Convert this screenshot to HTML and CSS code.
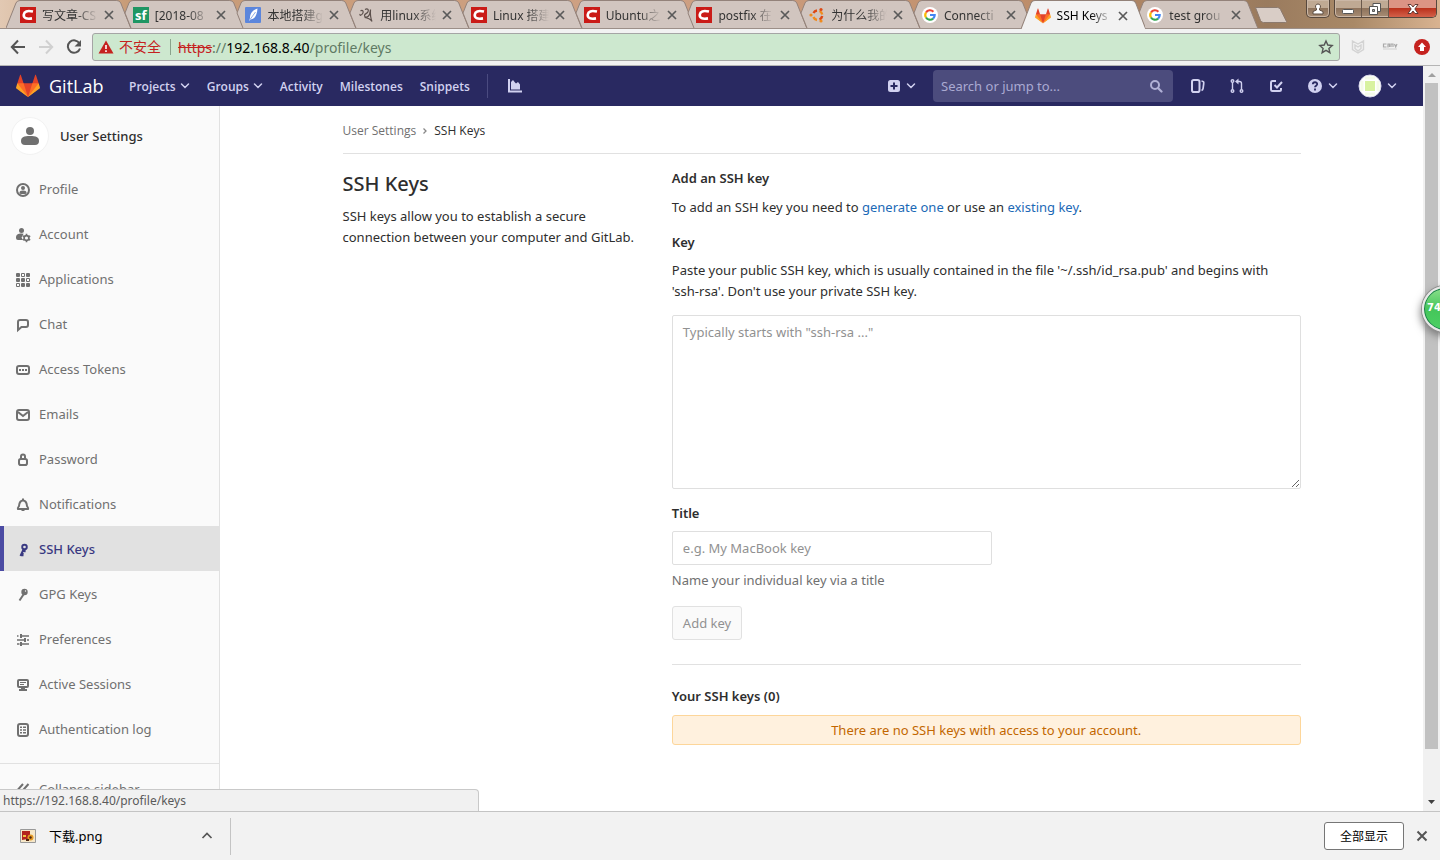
FILE: index.html
```html
<!DOCTYPE html>
<html lang="en">
<head>
    <meta charset="UTF-8">
    <meta name="viewport" content="width=device-width, initial-scale=1.0">
    <title>SSH Keys</title>
    <link rel="stylesheet" href="styles.css">
</head>
<body>
    <svg class="sprite" aria-hidden="true">
        <symbol id="tab-first" viewBox="0 0 125 28" preserveAspectRatio="none"><path d="M0 28 L10 3 Q11 .5 14 .5 H111 Q114 .5 115 3 L125 28"/></symbol>
        <symbol id="tab-next" viewBox="0 0 125 28" preserveAspectRatio="none"><path d="M12 28 L6 13 L10 3 Q11 .5 14 .5 H111 Q114 .5 115 3 L125 28"/></symbol>
        <symbol id="close" viewBox="0 0 10 10"><path d="M1 1l8 8M9 1l-8 8" fill="none" stroke="#5a5a5a" stroke-width="1.7"/></symbol>
        <symbol id="chevron" viewBox="0 0 10 10"><path d="M1.5 3l3.5 3.5L8.500 3" fill="none" stroke="currentColor" stroke-width="1.5" stroke-linecap="round"/></symbol>
        <symbol id="csdn" viewBox="0 0 16 16"><path fill="#ca1b17" d="M0 0h16v16H0z"/><path d="M13 4.600C7 3.200 4.200 4.500 3.800 7.500c-.5 3.500 2.400 4.800 8.200 3.900" fill="none" stroke="#fff" stroke-width="2.600"/></symbol>
        <symbol id="google" viewBox="0 0 16 16"><circle cx="8" cy="8" r="8" fill="#fff"/><g fill="none" stroke-width="2.200"><path stroke="#ea4335" d="M4 5.500A4.700 4.700 0 0 1 11.400 4.700"/><path stroke="#fbbc05" d="M4 5.500a4.700 4.700 0 0 0 0 5"/><path stroke="#34a853" d="M4 10.500a4.700 4.700 0 0 0 7.100 1.100"/><path stroke="#4285f4" d="M8 8h4.700a4.700 4.700 0 0 1-1.600 3.600"/></g></symbol>
        <symbol id="tanuki" viewBox="0 0 36 36"><path fill="#e24329" d="M2 14l9.380 9v-9l-4-12.280c-.205-.632-1.176-.632-1.380 0z"/><path fill="#e24329" d="M34 14l-9.380 9v-9l4-12.280c.205-.632 1.176-.632 1.380 0z"/><path fill="#e24329" d="M18 34.380L3 14h30z"/><path fill="#fc6d26" d="M18 34.380L11.380 14H2l4 11z"/><path fill="#fc6d26" d="M18 34.380L24.620 14H34l-4 11z"/><path fill="#fca326" d="M2 14L.1 20.160c-.18.565 0 1.200.5 1.560l17.420 12.660z"/><path fill="#fca326" d="M34 14l1.900 6.160c.18.565 0 1.200-.5 1.560L18 34.380z"/></symbol>
    </svg>

    <div class="titlebar">
        <div class="tabs">
            <div class="tab"><svg class="tab-shape"><use href="#tab-first"/></svg><svg class="favicon"><use href="#csdn"/></svg><span class="tab-title">写文章-CS</span><button class="tab-close" aria-label="Close"><svg><use href="#close"/></svg></button></div>
            <div class="tab"><svg class="tab-shape"><use href="#tab-next"/></svg><svg class="favicon" viewBox="0 0 16 16"><path fill="#1f9663" d="M0 0h16v16H0z"/><text class="sf" x="2" y="13">sf</text></svg><span class="tab-title">[2018-08</span><button class="tab-close" aria-label="Close"><svg><use href="#close"/></svg></button></div>
            <div class="tab"><svg class="tab-shape"><use href="#tab-next"/></svg><svg class="favicon" viewBox="0 0 16 16"><rect width="16" height="16" rx="1" fill="#5c86dc"/><path d="M12.500 1.500C8 3 5 6.500 5 11l-1 3 1.500-1.500C10 12 12 8 12.500 1.500z" fill="#fff"/><path d="M10.500 5L5 12.500" stroke="#5c86dc" stroke-width=".7"/></svg><span class="tab-title">本地搭建g</span><button class="tab-close" aria-label="Close"><svg><use href="#close"/></svg></button></div>
            <div class="tab"><svg class="tab-shape"><use href="#tab-next"/></svg><svg class="favicon" viewBox="0 0 16 16"><path d="M2.500 4c2-1.500 3.500.5 2.200 2.500S1.500 9 2 7M7 2.500c2.500-1.500 4 0 3 2.200S6.500 6.500 6.500 8.500s2.500 2 4 .5S12.300 4 12.500 2.500c-.3 4-.3 8 1.500 12M6.500 10.500c3 .3 5.500 1 7.500 4" fill="none" stroke="#5c504c" stroke-width="1.200"/></svg><span class="tab-title">用linux系统</span><button class="tab-close" aria-label="Close"><svg><use href="#close"/></svg></button></div>
            <div class="tab"><svg class="tab-shape"><use href="#tab-next"/></svg><svg class="favicon"><use href="#csdn"/></svg><span class="tab-title">Linux 搭建</span><button class="tab-close" aria-label="Close"><svg><use href="#close"/></svg></button></div>
            <div class="tab"><svg class="tab-shape"><use href="#tab-next"/></svg><svg class="favicon"><use href="#csdn"/></svg><span class="tab-title">Ubuntu之</span><button class="tab-close" aria-label="Close"><svg><use href="#close"/></svg></button></div>
            <div class="tab"><svg class="tab-shape"><use href="#tab-next"/></svg><svg class="favicon"><use href="#csdn"/></svg><span class="tab-title">postfix 在</span><button class="tab-close" aria-label="Close"><svg><use href="#close"/></svg></button></div>
            <div class="tab"><svg class="tab-shape"><use href="#tab-next"/></svg><svg class="favicon" viewBox="0 0 16 16"><g fill="none" stroke-width="2.400"><path stroke="#dd4814" d="M4.500 6A4.700 4.700 0 0 1 8 3.500"/><path stroke="#f08a1d" d="M10.500 4A4.700 4.700 0 0 1 13.200 7.500"/><path stroke="#dd4814" d="M13.200 9a4.700 4.700 0 0 1-2.700 3.500"/><path stroke="#f08a1d" d="M8 13a4.700 4.700 0 0 1-3.500-3"/></g><circle cx="2" cy="8" r="1.600" fill="#f08a1d"/><circle cx="12" cy="2.500" r="1.600" fill="#dd4814"/><circle cx="12" cy="14" r="1.600" fill="#f08a1d"/></svg><span class="tab-title">为什么我的</span><button class="tab-close" aria-label="Close"><svg><use href="#close"/></svg></button></div>
            <div class="tab"><svg class="tab-shape"><use href="#tab-next"/></svg><svg class="favicon"><use href="#google"/></svg><span class="tab-title">Connecti</span><button class="tab-close" aria-label="Close"><svg><use href="#close"/></svg></button></div>
            <div class="tab active"><svg class="tab-shape"><use href="#tab-first"/></svg><svg class="favicon"><use href="#tanuki"/></svg><span class="tab-title">SSH Keys</span><button class="tab-close" aria-label="Close"><svg><use href="#close"/></svg></button></div>
            <div class="tab"><svg class="tab-shape"><use href="#tab-next"/></svg><svg class="favicon"><use href="#google"/></svg><span class="tab-title">test grou</span><button class="tab-close" aria-label="Close"><svg><use href="#close"/></svg></button></div>
        </div>
        <button class="new-tab" aria-label="New tab"><svg width="34" height="18" viewBox="0 0 34 18"><path d="M1.500 1.500h22q2 0 3 2l6 12q0 1-1 1h-22q-2 0-3-2z" fill="#d9cdc6" stroke="#8c7a6e"/></svg></button>
        <div class="window-buttons">
            <button class="win-user" aria-label="User"><svg width="12" height="12" viewBox="0 0 12 12"><path d="M6 1a2.500 2.500 0 0 1 1.500 4.500V7L11 8.500V11H1V8.500L4.500 7V5.500A2.500 2.500 0 0 1 6 1z" fill="#fff" stroke="#5d4c40"/></svg></button>
            <div class="win-group">
                <button class="win-button" aria-label="Minimize"><svg width="14" height="12" viewBox="0 0 14 12"><rect x="1.500" y="6.500" width="11" height="4" rx="1" fill="#fff" stroke="#555"/></svg></button>
                <button class="win-button" aria-label="Restore"><svg width="14" height="12" viewBox="0 0 14 12"><path d="M5 .5h7.500v8H5z" fill="#fff" stroke="#555"/><path d="M1.500 3.500h8v8h-8z" fill="#fff" stroke="#555"/><path d="M4.500 6.500h2v2h-2z" fill="#aaa" stroke="#555"/></svg></button>
                <button class="win-button win-close" aria-label="Close window"><svg width="14" height="12" viewBox="0 0 14 12"><path d="M2 1.500h3l2 2.500 2-2.500h3L8.800 6l3.200 4.500H9L7 8l-2 2.500H2L5.200 6z" fill="#fff" stroke="#55302a" stroke-width=".9"/></svg></button>
            </div>
        </div>
    </div>

    <div class="toolbar">
        <button class="tool" aria-label="Back"><svg viewBox="0 0 16 16"><path d="M15 8H2M8 1.500L1.800 8 8 14.500" fill="none" stroke="#555" stroke-width="2"/></svg></button>
        <button class="tool" aria-label="Forward"><svg viewBox="0 0 16 16"><path d="M1 8h13M8 1.500L14.200 8 8 14.500" fill="none" stroke="#d0d0d0" stroke-width="2"/></svg></button>
        <button class="tool" aria-label="Reload"><svg viewBox="0 0 16 16"><path d="M13.500 4.500A6.200 6.200 0 1 0 14 9.500" fill="none" stroke="#555" stroke-width="2"/><path d="M15 1v6.500H8.500z" fill="#555"/></svg></button>
        <div class="omnibox">
            <svg class="warn" viewBox="0 0 16 14"><path d="M8 0.500L15.500 13.500H.5z" fill="#c5221f"/><path d="M8 5v4M8 10.300v1.700" stroke="#fff" stroke-width="1.600"/></svg>
            <span class="insecure">不安全</span>
            <span class="url" role="textbox" aria-label="Address"><s>https</s>://<b>192.168.8.40</b>/profile/keys</span>
            <button class="star" aria-label="Bookmark"><svg viewBox="0 0 16 16"><path d="M8 2l1.800 4 4.400.5-3.300 2.900 1 4.300L8 11.400l-3.900 2.300 1-4.300L1.800 6.500 6.200 6z" fill="none" stroke="#555" stroke-width="1.400"/></svg></button>
        </div>
        <div class="extensions">
            <svg width="16" height="16" viewBox="0 0 16 16"><path d="M2.500 2L8 5l5.500-3v8.500L8 14l-5.500-3.500zM5 6v3.500L8 12l3-2.500V6L8 8z" fill="none" stroke="#d3d3d3" stroke-width="1.400"/></svg>
            <svg width="16" height="16" viewBox="0 0 16 16"><path d="M4.500 5H1.500v3h3M6 8.500V5h1.500v3M9 8V5h2v3M12.500 5l1.200 3L15 5" fill="none" stroke="#aaa" stroke-width="1.200"/><path d="M1 10h14" stroke="#d0d0d0"/></svg>
            <svg width="16" height="16" viewBox="0 0 16 16"><circle cx="8" cy="8" r="8" fill="#c5221f"/><path d="M8 3.500L12 8H10v4H6V8H4z" fill="#fff"/></svg>
        </div>
    </div>

    <div class="viewport">
        <div class="page">
            <header class="navbar">
                <a class="brand" href="#"><svg class="brand-logo"><use href="#tanuki"/></svg>GitLab</a>
                <nav class="nav-links">
                    <a href="#">Projects <svg class="chevron"><use href="#chevron"/></svg></a>
                    <a href="#">Groups <svg class="chevron"><use href="#chevron"/></svg></a>
                    <a href="#">Activity</a>
                    <a href="#">Milestones</a>
                    <a href="#">Snippets</a>
                </nav>
                <a class="nav-chart" href="#" aria-label="Charts"><svg width="16" height="16" viewBox="0 0 16 16"><path d="M2 1v12.500h13" fill="none" stroke="currentColor" stroke-width="2"/><path d="M4 11.500V4l2-2 2 2.500 1 1 2-1.500 2 2.500v5z" fill="currentColor"/></svg></a>
                <div class="nav-right">
                    <a class="nav-icon" href="#" aria-label="New"><svg width="14" height="14" viewBox="0 0 14 14"><path fill-rule="evenodd" d="M3.500 1h7A2.500 2.500 0 0 1 13 3.500v7a2.500 2.500 0 0 1-2.500 2.500h-7A2.500 2.500 0 0 1 1 10.500v-7A2.500 2.500 0 0 1 3.500 1zM6 3.500V6H3.500v2H6v2.500h2V8h2.500V6H8V3.500z" fill="currentColor"/></svg><svg class="chevron"><use href="#chevron"/></svg></a>
                    <div class="search">
                        <input type="search" placeholder="Search or jump to..." aria-label="Search or jump to">
                        <svg width="14" height="14" viewBox="0 0 14 14"><circle cx="6" cy="6" r="4" fill="none" stroke="currentColor" stroke-width="2"/><path d="M9 9l3.500 3.500" stroke="currentColor" stroke-width="2.200" stroke-linecap="round"/></svg>
                    </div>
                    <a class="nav-icon solo" href="#" aria-label="Issues"><svg width="16" height="16" viewBox="0 0 16 16"><rect x="2" y="2" width="7.500" height="12" rx="1.800" fill="none" stroke="currentColor" stroke-width="2"/><path d="M11.500 3c2 .3 2.500 1 2.200 2.800l-.6 4.500c-.2 1.300-.6 1.700-1.600 2.200" fill="none" stroke="currentColor" stroke-width="1.700"/></svg></a>
                    <a class="nav-icon solo" href="#" aria-label="Merge requests"><svg width="16" height="16" viewBox="0 0 16 16"><g fill="none" stroke="currentColor" stroke-width="1.400"><circle cx="3.500" cy="3" r="1.300"/><circle cx="3.500" cy="13" r="1.300"/><circle cx="12.500" cy="13" r="1.300"/><path d="M3.500 4.500v7M12.500 11.500V5.500q0-2-2-2H8"/></g><path d="M9.500.500v6L6 3.500z" fill="currentColor"/></svg></a>
                    <a class="nav-icon solo" href="#" aria-label="Todos"><svg width="16" height="16" viewBox="0 0 16 16"><path d="M8 3H4.500Q3 3 3 4.500v7Q3 13 4.500 13h7q1.500 0 1.500-1.500V10" fill="none" stroke="currentColor" stroke-width="2"/><path d="M6.500 7l2.500 2.500L14 4" fill="none" stroke="currentColor" stroke-width="2"/></svg></a>
                    <a class="nav-icon" href="#" aria-label="Help"><svg width="16" height="16" viewBox="0 0 16 16"><circle cx="8" cy="8" r="7" fill="currentColor"/><path d="M5.800 6.300C5.900 3.500 10.300 3.700 10.200 6.200 10.100 7.700 8 7.700 8 9.300M8 10.600v1.800" fill="none" stroke="#292961" stroke-width="1.800"/></svg><svg class="chevron"><use href="#chevron"/></svg></a>
                    <a class="nav-icon" href="#" aria-label="Account"><svg width="24" height="24" viewBox="0 0 24 24"><circle cx="12" cy="12" r="11" fill="#fff" stroke="#d8d8ea"/><path d="M7 7h10v10H7z" fill="#d8f2a0"/><path d="M7 2.500h10v3H7zM7 18.500h10v3H7zM2.500 7h3v10h-3zM18.500 7h3v10h-3z" fill="#f5fbe9"/></svg><svg class="chevron"><use href="#chevron"/></svg></a>
                </div>
            </header>

            <div class="layout">
                <aside class="sidebar">
                    <a class="context" href="#">
                        <span class="context-avatar"><svg width="20" height="20" viewBox="0 0 20 20"><circle cx="10" cy="5" r="4" fill="currentColor"/><path d="M1 15c0-4 3-5 9-5s9 1 9 5q0 4-4 4H5q-4 0-4-4z" fill="currentColor"/></svg></span>
                        User Settings
                    </a>
                    <nav class="menu">
                        <a href="#"><svg viewBox="0 0 16 16"><circle cx="8" cy="8" r="6" fill="none" stroke="currentColor" stroke-width="2"/><circle cx="8" cy="6" r="2" fill="currentColor"/><path d="M4.500 10.500q0-2 3.500-2t3.500 2q0 1.500-1.500 1.500H6q-1.500 0-1.500-1.500z" fill="currentColor"/></svg>Profile</a>
                        <a href="#"><svg viewBox="0 0 16 16"><circle cx="6.500" cy="3.500" r="2.500" fill="currentColor"/><path d="M1 11c0-3.500 2-4.500 5.500-4.500q1.200 0 2 .3L7.500 9l-1 1.500L8 13H3q-2 0-2-2z" fill="currentColor"/><circle cx="11.500" cy="11" r="2.400" fill="none" stroke="currentColor" stroke-width="1.700"/><path d="M11.500 6.800v2M11.500 13.200v2M7.800 8.900l1.700 1M13.500 12.100l1.700 1M15.200 8.900l-1.700 1M9.500 12.100l-1.700 1" stroke="currentColor" stroke-width="1.600"/></svg>Account</a>
                        <a href="#"><svg viewBox="0 0 16 16"><g fill="currentColor"><rect x="1" y="1" width="4" height="4" rx="1"/><rect x="11" y="1" width="4" height="4" rx="1"/><rect x="1" y="6" width="4" height="4" rx="1"/><rect x="6" y="6" width="4" height="4" rx="1"/><rect x="6" y="11" width="4" height="4" rx="1"/><rect x="11" y="11" width="4" height="4" rx="1"/></g><path d="M6.500 1.500h3v3h-3zM11.500 6.500h3v3h-3zM1.500 11.500h3v3h-3z" fill="none" stroke="currentColor"/></svg>Applications</a>
                        <a href="#"><svg viewBox="0 0 16 16"><path d="M3 13V5q0-2 2-2h6q2 0 2 2v3q0 2-2 2H6.500z" fill="none" stroke="currentColor" stroke-width="2"/></svg>Chat</a>
                        <a href="#"><svg viewBox="0 0 16 16"><rect x="2" y="4" width="12" height="8" rx="2" fill="none" stroke="currentColor" stroke-width="2"/><path d="M4 7h2v2H4zM7 7h2v2H7zM10 7h2v2h-2z" fill="currentColor"/></svg>Access Tokens</a>
                        <a href="#"><svg viewBox="0 0 16 16"><rect x="2" y="3" width="12" height="10" rx="2" fill="none" stroke="currentColor" stroke-width="2"/><path d="M3 5l5 4 5-4" fill="none" stroke="currentColor" stroke-width="2"/></svg>Emails</a>
                        <a href="#"><svg viewBox="0 0 16 16"><rect x="4" y="7" width="8" height="6" rx="1.800" fill="none" stroke="currentColor" stroke-width="2"/><path d="M6 7V4.500a2 2 0 0 1 4 0V7" fill="none" stroke="currentColor" stroke-width="2"/></svg>Password</a>
                        <a href="#"><svg viewBox="0 0 16 16"><path d="M3 12q-.5-1 1-3c.3-3 1-5.500 4-5.500s3.700 2.500 4 5.500q1.500 2 1 3z" fill="none" stroke="currentColor" stroke-width="2"/><path d="M7 1.500h2v2H7zM6.500 13h3v1h-3z" fill="currentColor"/></svg>Notifications</a>
                        <a href="#" class="current"><svg viewBox="0 0 16 16"><circle cx="9.500" cy="5" r="2.300" fill="none" stroke="currentColor" stroke-width="1.900"/><path d="M8.500 7.500L5.500 14M8.300 8.500l2.300 1M6 12.500l2.500 1M6.500 11l2 .9" fill="none" stroke="currentColor" stroke-width="2"/></svg>SSH Keys</a>
                        <a href="#"><svg viewBox="0 0 16 16"><circle cx="9.500" cy="5" r="3.200" fill="currentColor"/><circle cx="10.500" cy="4" r=".7" fill="#fafafa"/><path d="M8.500 7.500L4.500 13.500" stroke="currentColor" stroke-width="2"/></svg>GPG Keys</a>
                        <a href="#"><svg viewBox="0 0 16 16"><path d="M2 4h1.500M5 4h9M2 8h7M12 8h2M2 12h2.500M7 12h7" stroke="currentColor" stroke-width="1.700"/><path d="M5 2h2v4H5zM9 6h2v4H9zM5 10h2v4H5z" fill="currentColor"/></svg>Preferences</a>
                        <a href="#"><svg viewBox="0 0 16 16"><rect x="3" y="3" width="10" height="7" rx="1" fill="none" stroke="currentColor" stroke-width="2"/><path d="M5 5.500h6M5 7.500h4" stroke="currentColor"/><path d="M6 10.500h4V12h2v2H4v-2h2z" fill="currentColor"/></svg>Active Sessions</a>
                        <a href="#"><svg viewBox="0 0 16 16"><rect x="3" y="2" width="10" height="12" rx="2" fill="none" stroke="currentColor" stroke-width="2"/><path d="M5 4.500h2v1.500H5zM8 4.500h3v1.500H8zM5 7.300h2v1.500H5zM8 7.300h3v1.500H8zM5 10h2v1.500H5zM8 10h3v1.500H8z" fill="currentColor"/></svg>Authentication log</a>
                    </nav>
                    <button class="collapse"><svg viewBox="0 0 16 16"><path d="M8 3L3.500 8 8 13M13.500 3L9 8l4.500 5" fill="none" stroke="currentColor" stroke-width="2"/></svg>Collapse sidebar</button>
                </aside>

                <main class="content">
                    <div class="container">
                        <nav class="breadcrumbs" aria-label="Breadcrumb">
                            <a href="#">User Settings</a>
                            <svg width="8" height="8" viewBox="0 0 8 8"><path d="M2.500 1.500L5 4 2.500 6.500" fill="none" stroke="#888" stroke-width="1.300"/></svg>
                            <a class="here" href="#">SSH Keys</a>
                        </nav>
                        <div class="row">
                            <div class="intro">
                                <h4>SSH Keys</h4>
                                <p>SSH keys allow you to establish a secure connection between your computer and GitLab.</p>
                            </div>
                            <div class="settings">
                                <h5>Add an SSH key</h5>
                                <p class="lead">To add an SSH key you need to <a href="#">generate one</a> or use an <a href="#">existing key</a>.</p>
                                <form>
                                    <label for="key">Key</label>
                                    <p class="key-help">Paste your public SSH key, which is usually contained in the file '~/.ssh/id_rsa.pub' and begins with <span class="nowrap">'ssh-rsa'.</span> Don't use your private SSH key.</p>
                                    <textarea id="key" placeholder='Typically starts with "ssh-rsa ..."'></textarea>
                                    <label for="title">Title</label>
                                    <input class="title-input" id="title" type="text" placeholder="e.g. My MacBook key">
                                    <p class="hint">Name your individual key via a title</p>
                                    <button class="add-key" type="submit" disabled>Add key</button>
                                </form>
                                <hr>
                                <h5>Your SSH keys (0)</h5>
                                <p class="empty">There are no SSH keys with access to your account.</p>
                            </div>
                        </div>
                    </div>
                </main>
            </div>
        </div>
        <div class="scrollbar">
            <svg width="17" height="17" viewBox="0 0 17 17"><path d="M5 11l4-4 4 4z" fill="#a0a0a0"/></svg>
            <div class="thumb"></div>
            <div class="track"></div>
            <svg width="17" height="17" viewBox="0 0 17 17"><path d="M5 6h7l-3.500 4z" fill="#404040"/></svg>
        </div>
        <div class="speed-ball">74</div>
        <div class="status">https://192.168.8.40/profile/keys</div>
    </div>

    <div class="downloads">
        <button class="download"><svg width="16" height="14" viewBox="0 0 16 14"><path d="M.5.500h15v13H.5z" fill="#f6e7c8" stroke="#999"/><path d="M2 2h8v5l-2 3-6 1z" fill="#b3241c"/><path d="M3 6h3v2H3z" fill="#f0c040"/><circle cx="10.500" cy="8.500" r="3" fill="#e59a23"/><circle cx="10.500" cy="8.500" r="1.200" fill="#4b2410"/><path d="M6 10h3v2H6z" fill="#4b2410"/></svg><span>下载.png</span></button>
        <button class="download-menu" aria-label="More"><svg width="12" height="12" viewBox="0 0 12 12"><path d="M1.500 8L6 3.500 10.500 8" fill="none" stroke="#555" stroke-width="1.700"/></svg></button>
        <button class="show-all">全部显示</button>
        <button class="shelf-close" aria-label="Close downloads"><svg width="12" height="12" viewBox="0 0 12 12"><path d="M1.500 1.500l9 9M10.500 1.500l-9 9" stroke="#555" stroke-width="2"/></svg></button>
    </div>
</body>
</html>
```

FILE: styles.css
```css
* {
    box-sizing: border-box;
}
body {
    margin: 0;
    height: 100vh;
    display: flex;
    flex-direction: column;
    overflow: hidden;
    font-family: "Noto Sans", "Noto Sans CJK SC", sans-serif;
    font-size: 13px;
    line-height: 21px;
    color: #2e2e2e;
}
button {
    font: inherit;
    color: inherit;
    background: none;
    border: 0;
    padding: 0;
}
a {
    color: #1b69b6;
    text-decoration: none;
}
svg {
    flex: none;
    display: block;
}
h4, h5, p {
    margin: 0;
}
.sprite {
    position: absolute;
    width: 0;
    height: 0;
}
.nowrap {
    white-space: nowrap;
}

/* browser tabs */
.titlebar {
    display: flex;
    height: 29px;
    flex: none;
    padding-left: 6px;
    background: linear-gradient(90deg, #e2c9b3 0, #c79b76 9%, #cfa184 45%, #c08f6b 70%, #9a7b5e 88%, #a98967 94%, #d9b391 100%);
    border-bottom: 1px solid #9c8f88;
}
.tabs {
    flex: 1;
    min-width: 0;
    display: flex;
}
.tab {
    position: relative;
    z-index: 0;
    flex: 1;
    min-width: 0;
    height: 28px;
    display: flex;
    align-items: center;
    padding: 2px 17px 0 14px;
    margin-left: -12px;
    color: #333;
    font-size: 12px;
}
.tab:first-child {
    margin-left: 0;
}
.tab-shape {
    position: absolute;
    inset: 0;
    width: 100%;
    height: 100%;
    fill: #d1c5bf;
    stroke: #938279;
    stroke-width: 1px;
    z-index: -1;
}
.tab.active {
    z-index: 1;
    height: 29px;
    color: #000;
}
.active .tab-shape {
    fill: #f2f2f2;
}
.favicon {
    width: 16px;
    height: 16px;
    margin-right: 6px;
}
.sf {
    font: bold 13px "Open Sans", sans-serif;
    fill: #fff;
}
.tab-title {
    flex: 1;
    min-width: 0;
    overflow: hidden;
    white-space: nowrap;
    mask-image: linear-gradient(90deg, #000 60%, transparent);
}
.tab-close {
    margin-left: 6px;
}
.tab-close svg {
    width: 10px;
    height: 10px;
}
.new-tab {
    flex: none;
    width: 34px;
    height: 18px;
    margin: 6px 18px 0 -4px;
}
.window-buttons {
    flex: none;
    display: flex;
    gap: 4px;
    padding-right: 3px;
}
.win-user, .win-group {
    display: flex;
    height: 18px;
    border: 1px solid #57483d;
    border-top: 0;
    border-radius: 0 0 5px 5px;
    box-shadow: inset 0 0 0 1px #cbb7a6;
    background: linear-gradient(#bfa993 50%, #8e735c 50%, #a88d74);
    overflow: hidden;
}
.win-user {
    width: 24px;
    align-items: center;
    justify-content: center;
}
.win-button {
    width: 27px;
    display: flex;
    align-items: center;
    justify-content: center;
    border-right: 1px solid #6a594c;
}
.win-close {
    width: 47px;
    border: 0;
    background: linear-gradient(#dc9484 50%, #bb321d 50%, #d3614a);
}

/* browser toolbar */
.toolbar {
    flex: none;
    display: flex;
    align-items: center;
    height: 37px;
    padding: 0 10px;
    background: #f2f2f2;
    border-bottom: 1px solid #b5b5b5;
}
.tool {
    width: 16px;
    margin-right: 12px;
}
.tool svg {
    width: 16px;
    height: 16px;
}
.omnibox {
    flex: 1;
    display: flex;
    align-items: center;
    height: 28px;
    margin-right: 10px;
    margin-left: -2px;
    padding: 0 5px;
    background: #cde8cf;
    border: 1px solid #a5a5a5;
    border-radius: 3px;
    font-size: 14px;
}
.warn {
    width: 16px;
    height: 14px;
    margin-right: 5px;
}
.insecure {
    color: #c5221f;
    padding-right: 9px;
    border-right: 1px solid #8aa38c;
    line-height: 16px;
}
.url {
    flex: 1;
    padding-left: 7px;
    color: #5f7a64;
}
.url s {
    color: #c5221f;
}
.url b {
    font-weight: 400;
    color: #000;
}
.star svg {
    width: 16px;
    height: 16px;
}
.extensions {
    display: flex;
    gap: 16px;
}

/* web page */
.viewport {
    position: relative;
    flex: 1;
    min-height: 0;
    display: flex;
    overflow: hidden;
}
.page {
    flex: 1;
    display: flex;
    flex-direction: column;
    overflow: hidden;
}
.navbar {
    flex: none;
    display: flex;
    align-items: center;
    height: 40px;
    padding: 0 22px 0 16px;
    background: #292961;
    color: #d1d1f0;
}
.navbar a {
    color: #d1d1f0;
}
.navbar .brand {
    display: flex;
    align-items: center;
    gap: 9px;
    width: 113px;
    color: #fff;
    font-family: "Open Sans", sans-serif;
    font-size: 18px;
}
.brand-logo {
    width: 24px;
    height: 24px;
}
.nav-links {
    display: flex;
    gap: 17px;
    font-family: "Open Sans", sans-serif;
    font-size: 12px;
    font-weight: 600;
}
.nav-links a {
    display: flex;
    align-items: center;
    gap: 4px;
}
.chevron {
    width: 10px;
    height: 10px;
}
.nav-chart {
    margin-left: 17px;
    padding: 4px 0 4px 19px;
    border-left: 1px solid #4b4b80;
}
.nav-right {
    display: flex;
    align-items: center;
    margin-left: auto;
}
.nav-icon {
    display: flex;
    align-items: center;
    gap: 5px;
    margin-right: 20px;
}
.nav-icon:first-child {
    margin-right: 17px;
}
.nav-icon:last-child {
    margin-right: 4px;
}
.nav-icon.solo {
    margin-right: 23px;
}
.search {
    display: flex;
    align-items: center;
    width: 240px;
    height: 32px;
    margin-right: 17px;
    padding: 0 10px 0 8px;
    border-radius: 4px;
    background: #4c4c7d;
    color: #b0b0d6;
}
.search input {
    flex: 1;
    min-width: 0;
    padding: 0;
    border: 0;
    background: none;
    font: inherit;
    color: #fff;
}
.search input::placeholder {
    color: #aaaad2;
}

.layout {
    flex: 1;
    display: flex;
    min-height: 0;
}
.sidebar {
    flex: none;
    width: 220px;
    background: #fafafa;
    border-right: 1px solid #e1e1e1;
    overflow: hidden;
}
.context {
    display: flex;
    align-items: center;
    gap: 11px;
    height: 60px;
    padding-left: 11px;
    color: #2e2e2e;
    font-weight: 500;
}
.context-avatar {
    display: flex;
    align-items: center;
    justify-content: center;
    width: 38px;
    height: 38px;
    border-radius: 50%;
    background: #fff;
    border: 1px solid #f2f2f2;
    color: #707070;
}
.menu a, .collapse {
    display: flex;
    align-items: center;
    gap: 8px;
    width: 100%;
    height: 45px;
    padding: 2px 0 0 15px;
    color: #707070;
}
.menu svg, .collapse svg {
    width: 16px;
    height: 16px;
}
.menu .current {
    padding-left: 11px;
    border-left: 4px solid #4b4ba3;
    background: #e1e1e1;
    color: #393982;
    font-weight: 500;
}
.collapse {
    height: 49px;
    margin-top: 12px;
    border-top: 1px solid #e1e1e1;
}

.content {
    flex: 1;
    background: #fff;
}
.container {
    max-width: 990px;
    margin: 0 auto;
    padding: 0 16px;
}
.breadcrumbs {
    display: flex;
    align-items: center;
    gap: 5px;
    height: 48px;
    padding-top: 2px;
    border-bottom: 1px solid #e1e1e1;
    font-family: "Open Sans", sans-serif;
    font-size: 12px;
}
.breadcrumbs a {
    color: #707070;
}
.breadcrumbs .here {
    color: #2e2e2e;
    font-weight: 500;
}
.row {
    display: flex;
    margin: 0 -15px;
}
.intro {
    width: 33.333%;
    padding: 16px 15px 0;
}
.intro h4 {
    margin-bottom: 8px;
    font-size: 20px;
    line-height: 28px;
    font-weight: 500;
}
.settings {
    flex: 1;
    padding: 14px 15px 0;
}
h5, label {
    display: block;
    font-size: 13px;
    line-height: 21px;
    font-weight: 600;
}
h5 {
    margin-bottom: 8px;
}
.lead {
    margin-bottom: 14px;
}
.key-help {
    margin: 7px 0 13px;
}
textarea, .title-input {
    display: block;
    border: 1px solid #dfdfdf;
    border-radius: 2px;
    padding: 6px 10px;
    font: inherit;
    color: #2e2e2e;
}
textarea {
    width: 100%;
    height: 174px;
    margin-bottom: 14px;
}
textarea::placeholder, .title-input::placeholder {
    color: #919191;
}
.title-input {
    width: 320px;
    height: 34px;
    margin-top: 7px;
}
.hint {
    margin: 5px 0 15px;
    color: #707070;
}
.add-key {
    height: 34px;
    padding: 0 10px;
    border: 1px solid #e1e1e1;
    border-radius: 3px;
    background: #fafafa;
    color: #919191;
}
hr {
    margin: 24px 0 21px;
    border: 0;
    border-top: 1px solid #e1e1e1;
}
.empty {
    padding: 4px 0;
    border: 1px solid #fdd69a;
    border-radius: 3px;
    background: #fff1de;
    color: #c26700;
    text-align: center;
    line-height: 20px;
}

.scrollbar {
    flex: none;
    display: flex;
    flex-direction: column;
    width: 17px;
    background: #f1f1f1;
}
.thumb {
    flex: 666;
    margin: 0 2px;
    background: #c1c1c1;
}
.track {
    flex: 45;
}
.speed-ball {
    position: absolute;
    top: 220px;
    right: -28px;
    width: 46px;
    height: 46px;
    padding-left: 3px;
    border: 2px solid #e8e8e8;
    border-radius: 50%;
    background: linear-gradient(#8ce08c, #45c65a 50%, #4bd064);
    box-shadow: inset 0 0 0 1px #1b7a4c, 0 0 0 1px #909090, -1px 4px 8px #777;
    color: #fff;
    font: bold 10px/40px "DejaVu Sans", sans-serif;
}
.status {
    position: absolute;
    left: 0;
    bottom: 0;
    width: 479px;
    height: 22px;
    padding-left: 3px;
    border: 1px solid #c9c9c9;
    border-width: 1px 1px 0 0;
    border-radius: 0 4px 0 0;
    background: #f1f1f1;
    color: #5a5a5a;
    font-size: 12px;
}

/* download shelf */
.downloads {
    flex: none;
    display: flex;
    align-items: center;
    height: 49px;
    padding: 0 12px 0 20px;
    background: #f2f2f2;
    border-top: 1px solid #c4c4c4;
    color: #000;
}
.download {
    display: flex;
    align-items: center;
    gap: 13px;
    width: 181px;
    font-size: 13px;
}
.download-menu {
    display: flex;
    align-items: center;
    width: 30px;
    height: 37px;
    border-right: 1px solid #c4c4c4;
}
.show-all {
    margin-left: auto;
    width: 80px;
    height: 28px;
    border: 1px solid #767676;
    border-radius: 3px;
    background: #fff;
    font-size: 12px;
}
.shelf-close {
    margin-left: 12px;
}
```
